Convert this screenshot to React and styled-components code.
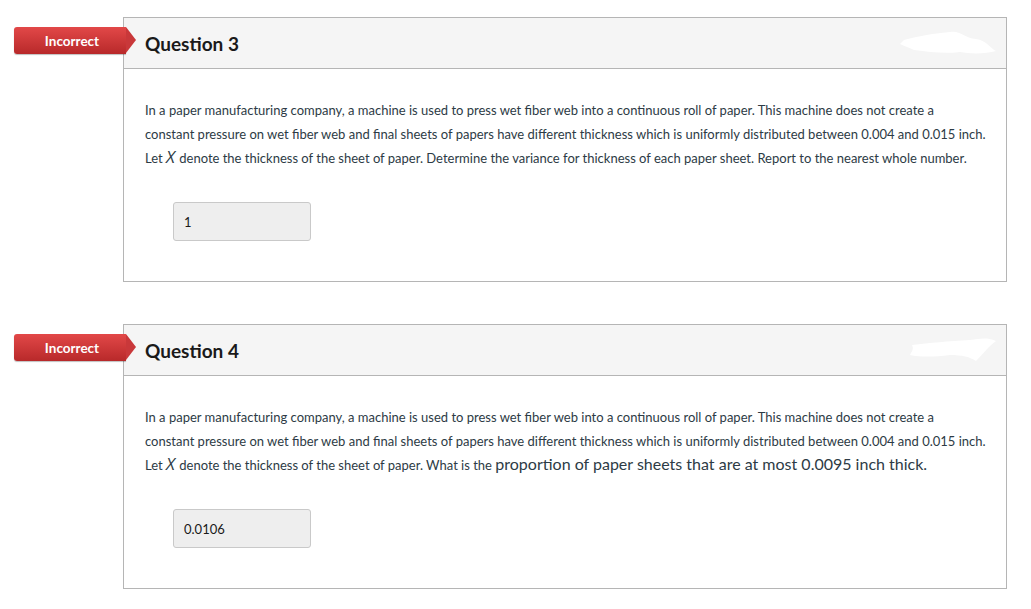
import React from "react";
import styled, { createGlobalStyle } from "styled-components";

const Global = createGlobalStyle`
  body {
    margin: 0;
    background: #fff;
    font-family: Lato, "Noto Sans", sans-serif;
    color: #2d3b45;
  }
`;

const Page = styled.div`
  padding: 17px 25px 20px 123px;
  display: flex;
  flex-direction: column;
  gap: 42px;
`;

const Question = styled.div`
  position: relative;
  border: 1px solid #b5b5b5;
  width: 882px;
`;

const Badge = styled.div`
  position: absolute;
  left: -110px;
  top: 9px;
  height: 27px;
  width: 112px;
  box-sizing: border-box;
  padding-left: 4px;
  display: flex;
  align-items: center;
  justify-content: center;
  color: #fff;
  font-weight: 700;
  font-size: 13.5px;
  background: linear-gradient(#e24848, #b8292a);
  border-radius: 3px 0 0 3px;
  box-shadow: 0 1px 1px rgba(0, 0, 0, 0.25);
  &::after {
    content: "";
    position: absolute;
    right: -10px;
    top: 0;
    border-top: 13.5px solid transparent;
    border-bottom: 13.5px solid transparent;
    border-left: 10px solid #c9383a;
  }
`;

const Header = styled.div`
  height: 50px;
  background: #f5f5f5;
  border-bottom: 1px solid #b5b5b5;
  display: flex;
  align-items: center;
  justify-content: space-between;
  padding: 0 6px 0 21px;
`;

const Title = styled.h2`
  margin: 0;
  font-size: 19px;
  font-weight: 700;
  color: #1a1a1a;
`;

const Body = styled.div`
  padding: 29px 8px 40px 21px;
`;

const Text = styled.p`
  margin: 0;
  font-size: 13px;
  line-height: 24px;
  color: #2d3b45;
  white-space: nowrap;
`;

const Var = styled.span`
  font-style: italic;
  font-size: 17px;
  line-height: 0;
  font-family: "Open Sans", sans-serif;
  font-weight: 400;
  margin-right: 1px;
`;

const Big = styled.span`
  font-size: 16px;
  line-height: 0;
`;

const Answer = styled.div`
  margin: 32px 0 0 28px;
  width: 138px;
  height: 39px;
  box-sizing: border-box;
  background: #eeeeee;
  border: 1px solid #c9c9c9;
  border-radius: 3px;
  display: flex;
  align-items: center;
  padding-left: 10px;
  font-size: 13px;
  color: #1a1a1a;
`;

const Scribble = ({ variant }) =>
  variant === 1 ? (
    <svg width="110" height="34" viewBox="0 0 110 34">
      <path
        d="M14 14 C30 10 40 8 60 6 C70 4 74 12 86 13 C96 14 100 22 106 25 C96 28 80 28 70 26 C54 28 40 26 24 24 C20 22 14 20 10 18 Z"
        fill="#fff"
      />
    </svg>
  ) : (
    <svg width="110" height="34" viewBox="0 0 110 34">
      <path
        d="M22 12 C40 10 58 8 80 7 C90 6 96 4 106 8 C98 14 94 20 86 28 C80 24 72 22 60 22 C44 24 30 24 20 22 C22 18 24 16 22 12 Z"
        fill="#fff"
      />
    </svg>
  );

const Card = ({ num, scribble, text, answer }) => (
  <Question>
    <Badge>Incorrect</Badge>
    <Header>
      <Title>Question {num}</Title>
      <Scribble variant={scribble} />
    </Header>
    <Body>
      <Text>{text}</Text>
      <Answer>{answer}</Answer>
    </Body>
  </Question>
);

const Lead = () => (
  <>
    In a paper manufacturing company, a machine is used to press wet fiber web into a continuous
    roll of paper. This machine does not create a
    <br />
    constant pressure on wet fiber web and final sheets of papers have different thickness which
    is uniformly distributed between 0.004 and 0.015 inch.
    <br />
    Let <Var>X</Var>
  </>
);

export default function App() {
  return (
    <>
      <Global />
      <Page>
        <Card
          num={3}
          scribble={1}
          answer="1"
          text={
            <>
              <Lead /> denote the thickness of the sheet of paper. Determine the variance for
              thickness of each paper sheet. Report to the nearest whole number.
            </>
          }
        />
        <Card
          num={4}
          scribble={2}
          answer="0.0106"
          text={
            <>
              <Lead /> denote the thickness of the sheet of paper. What is the{" "}
              <Big>proportion of paper sheets that are at most 0.0095 inch thick.</Big>
            </>
          }
        />
      </Page>
    </>
  );
}
